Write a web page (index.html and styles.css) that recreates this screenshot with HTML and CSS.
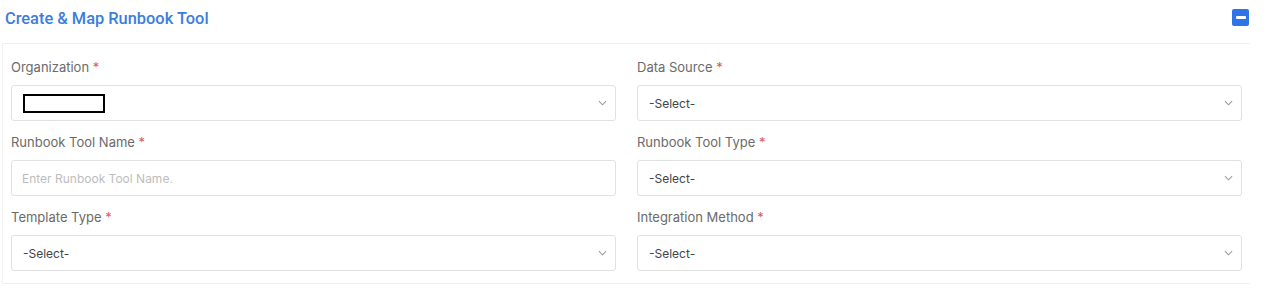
FILE: index.html
```html
<!DOCTYPE html>
<html lang="en">

<head>
  <meta charset="UTF-8">
  <meta name="viewport" content="width=device-width, initial-scale=1.0">
  <title>Create &amp; Map Runbook Tool</title>
  <link rel="stylesheet" href="styles.css">
</head>

<body>
  <div class="card">
    <div class="card-header">
      <h3>Create &amp; Map Runbook Tool</h3>
      <button class="collapse-btn" title="Collapse"><span></span></button>
    </div>
    <div class="card-body">
      <div class="form-grid">
        <div class="field">
          <label>Organization <span class="req">*</span></label>
          <div class="select">
            <span class="redacted"></span>
            <svg class="chev" viewBox="0 0 10 6"><path d="M1 1l4 4 4-4" /></svg>
          </div>
        </div>
        <div class="field">
          <label>Data Source <span class="req">*</span></label>
          <div class="select">
            <span>-Select-</span>
            <svg class="chev" viewBox="0 0 10 6"><path d="M1 1l4 4 4-4" /></svg>
          </div>
        </div>
        <div class="field">
          <label>Runbook Tool Name <span class="req">*</span></label>
          <input type="text" placeholder="Enter Runbook Tool Name.">
        </div>
        <div class="field">
          <label>Runbook Tool Type <span class="req">*</span></label>
          <div class="select">
            <span>-Select-</span>
            <svg class="chev" viewBox="0 0 10 6"><path d="M1 1l4 4 4-4" /></svg>
          </div>
        </div>
        <div class="field">
          <label>Template Type <span class="req">*</span></label>
          <div class="select">
            <span>-Select-</span>
            <svg class="chev" viewBox="0 0 10 6"><path d="M1 1l4 4 4-4" /></svg>
          </div>
        </div>
        <div class="field">
          <label>Integration Method <span class="req">*</span></label>
          <div class="select">
            <span>-Select-</span>
            <svg class="chev" viewBox="0 0 10 6"><path d="M1 1l4 4 4-4" /></svg>
          </div>
        </div>
      </div>
    </div>
  </div>
</body>

</html>
```

FILE: styles.css
```css
body {
  font-family: Inter, Roboto, 'Liberation Sans', sans-serif;
  background-color: #fff;
  margin: 0;
  padding: 0;
}

.card {
  width: 1248px;
  margin-left: 2px;
}

.card-header {
  height: 43px;
  display: flex;
  align-items: center;
  justify-content: space-between;
  padding: 0 1px 0 3px;
  border-bottom: 1px solid #efefef;
}

.card-header h3 {
  margin: 0;
  font-family: Roboto, 'Liberation Sans', sans-serif;
  font-size: 16.4px;
  font-weight: 500;
  color: #3b7ddd;
  margin-top: -7px;
}

.collapse-btn {
  width: 17px;
  height: 17px;
  background-color: #2f74e6;
  border: none;
  border-radius: 2px;
  padding: 0;
  display: flex;
  align-items: center;
  justify-content: center;
  margin-top: -9px;
  cursor: pointer;
}

.collapse-btn span {
  width: 10px;
  height: 3px;
  background-color: #fff;
  border-radius: 1px;
}

.card-body {
  padding: 15px 8px 12px 8px;
  border-left: 1px solid #f2f2f2;
  border-bottom: 1px solid #efefef;
}

.form-grid {
  display: grid;
  grid-template-columns: 1fr 1fr;
  column-gap: 21px;
  row-gap: 13px;
}

.field label {
  display: block;
  font-size: 13px;
  line-height: 16px;
  color: #6a6a6a;
  margin-bottom: 10px;
}

.req {
  color: #e05a5a;
}

.select,
.field input {
  box-sizing: border-box;
  width: 100%;
  height: 36px;
  border: 1px solid #e1e1e1;
  border-radius: 3px;
  background-color: #fff;
  font-family: inherit;
  font-size: 12px;
  color: #444;
}

.select {
  display: flex;
  align-items: center;
  justify-content: space-between;
  padding: 0 8px 0 11px;
}

.field input {
  padding: 0 10px;
  outline: none;
}

.field input::placeholder {
  color: #bdbdbd;
}

.redacted {
  display: block;
  width: 78px;
  height: 15px;
  border: 2px solid #000;
}

.chev {
  width: 9px;
  height: 6px;
  fill: none;
  stroke: #9a9a9a;
  stroke-width: 1.2;
}
```
